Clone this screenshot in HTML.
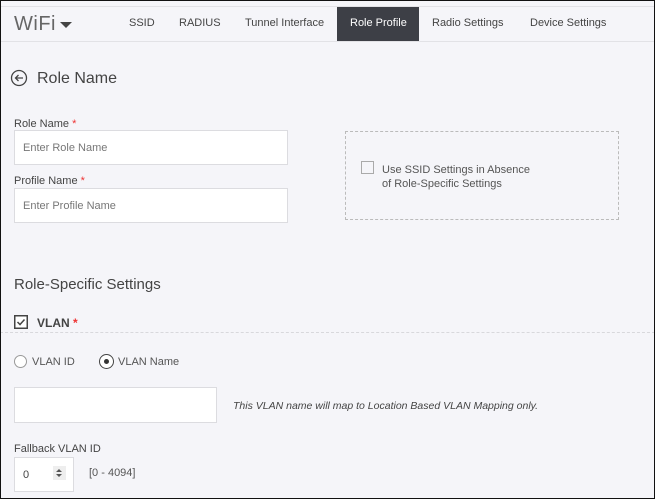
<!DOCTYPE html>
<html><head><meta charset="utf-8"><style>
*{box-sizing:border-box;margin:0;padding:0}
body{width:655px;height:499px;overflow:hidden;background:#f5f5f9;font-family:"Liberation Sans",sans-serif;color:#333;position:relative}
.frame{position:absolute;inset:0;border:1px solid #111;pointer-events:none}
.a{position:absolute;white-space:nowrap}
.hdr{position:absolute;left:0;top:6px;width:655px;height:36px;border-top:1px solid #e2e2e6;border-bottom:1px solid #e2e2e6}
.tab{position:absolute;top:17px;font-size:11px;color:#444}
.inp{position:absolute;background:#fff;border:1px solid #dcdce0;font-size:11px;color:#777;padding-left:8px;display:flex;align-items:center}
.lbl{font-size:11px;color:#444}
.star{color:#e33}
</style></head><body>
<div class="hdr"></div>
<div class="a" style="left:14px;top:13px;font-size:20px;color:#666;letter-spacing:0.5px">WiFi</div>
<div class="a" style="left:60px;top:22px;width:0;height:0;border-left:6px solid transparent;border-right:6px solid transparent;border-top:6px solid #444"></div>
<div class="tab" style="left:129px">SSID</div>
<div class="tab" style="left:179px">RADIUS</div>
<div class="tab" style="left:245px">Tunnel Interface</div>
<div class="a" style="left:337px;top:7px;width:82px;height:34px;background:#3d3f46"></div>
<div class="tab" style="left:350px;color:#fff">Role Profile</div>
<div class="tab" style="left:432px">Radio Settings</div>
<div class="tab" style="left:530px">Device Settings</div>

<svg class="a" style="left:10px;top:69px" width="18" height="18" viewBox="0 0 18 18"><circle cx="9" cy="9" r="7.5" fill="none" stroke="#444" stroke-width="1.3"/><path d="M13 9H5.5M8.5 6L5.5 9L8.5 12" fill="none" stroke="#444" stroke-width="1.3"/></svg>
<div class="a" style="left:37px;top:70px;font-size:16px;color:#444">Role Name</div>

<div class="a lbl" style="left:14px;top:118px">Role Name <span class="star">*</span></div>
<div class="inp" style="left:14px;top:130px;width:274px;height:35px">Enter Role Name</div>
<div class="a lbl" style="left:14px;top:175px">Profile Name <span class="star">*</span></div>
<div class="inp" style="left:14px;top:188px;width:274px;height:35px">Enter Profile Name</div>

<div class="a" style="left:345px;top:131px;width:274px;height:89px;border:1px dashed #bbb"></div>
<div class="a" style="left:361px;top:161px;width:13px;height:13px;border:1.5px solid #aaa;background:#f5f5f9"></div>
<div class="a" style="left:382px;top:163px;font-size:11px;color:#555;line-height:14px">Use SSID Settings in Absence<br>of Role-Specific Settings</div>

<div class="a" style="left:14px;top:276px;font-size:15px;color:#444">Role-Specific Settings</div>
<svg class="a" style="left:14px;top:315px" width="14" height="14" viewBox="0 0 14 14"><rect x="0.75" y="0.75" width="12.5" height="12.5" fill="#fff" stroke="#444" stroke-width="1.5"/><path d="M3.5 7L6 9.5L10.5 4.5" fill="none" stroke="#444" stroke-width="1.5"/></svg>
<div class="a" style="left:37px;top:316px;font-size:12px;font-weight:bold;color:#444">VLAN <span class="star">*</span></div>
<div class="a" style="left:0;top:332px;width:655px;border-top:1px dashed #d8d8dc"></div>

<div class="a" style="left:14px;top:355px;width:13px;height:13px;border:1px solid #999;border-radius:50%;background:#fff"></div>
<div class="a" style="left:32px;top:356px;font-size:11px;color:#555">VLAN ID</div>
<div class="a" style="left:99px;top:354px;width:15px;height:15px;border:1.5px solid #444;border-radius:50%;background:#fff"></div>
<div class="a" style="left:104px;top:359px;width:5px;height:5px;border-radius:50%;background:#333"></div>
<div class="a" style="left:118px;top:356px;font-size:11px;color:#555">VLAN Name</div>

<div class="inp" style="left:14px;top:387px;width:203px;height:36px"></div>
<div class="a" style="left:233px;top:400px;font-size:10.5px;font-style:italic;color:#444">This VLAN name will map to Location Based VLAN Mapping only.</div>

<div class="a lbl" style="left:14px;top:443px">Fallback VLAN ID</div>
<div class="inp" style="left:14px;top:457px;width:60px;height:35px;color:#444">0</div>
<div class="a" style="left:53px;top:466px;width:13px;height:14px;background:#eee"></div>
<svg class="a" style="left:55px;top:468px" width="8" height="10" viewBox="0 0 8 10"><path d="M1 4L4 1L7 4Z M1 6L4 9L7 6Z" fill="#555"/></svg>
<div class="a" style="left:89px;top:467px;font-size:11px;color:#555">[0 - 4094]</div>
<div class="frame"></div>
</body></html>
